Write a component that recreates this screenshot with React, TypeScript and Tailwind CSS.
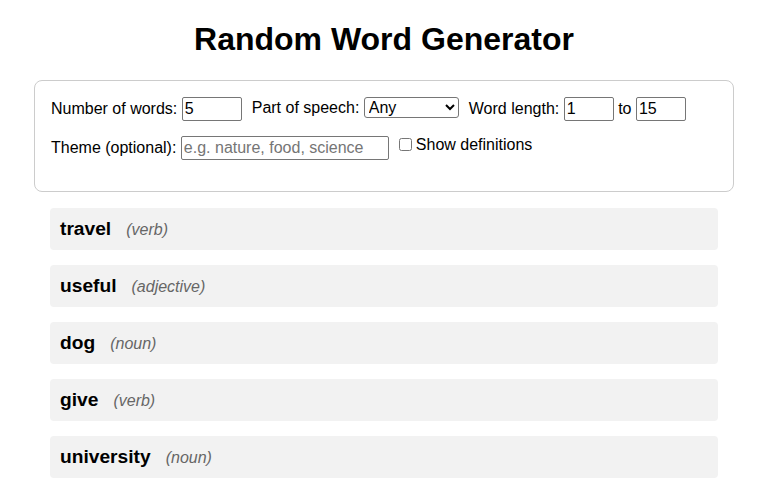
import { useState } from "react";

interface WordEntry {
  word: string;
  pos: string;
}

const WORDS: WordEntry[] = [
  { word: "travel", pos: "verb" },
  { word: "useful", pos: "adjective" },
  { word: "dog", pos: "noun" },
  { word: "give", pos: "verb" },
  { word: "university", pos: "noun" },
];

const inputCls =
  "h-[24px] border border-[#767676] rounded-[2px] bg-white px-[2px] text-[16px] leading-[normal] align-baseline placeholder:text-[#757575] outline-none";

export default function App() {
  const [count, setCount] = useState("5");
  const [pos, setPos] = useState("any");
  const [minLen, setMinLen] = useState("1");
  const [maxLen, setMaxLen] = useState("15");
  const [theme, setTheme] = useState("");
  const [showDefs, setShowDefs] = useState(false);

  return (
    <div className="min-h-screen bg-white font-['Liberation_Sans',Arial,sans-serif] text-[16px] leading-[normal] text-black">
      <div className="mx-auto max-w-[700px]">
        <h1 className="my-[21.44px] text-center text-[32px] font-bold leading-[normal]">
          Random Word Generator
        </h1>

        <div className="rounded-[8px] border border-[#cccccc] p-[16px]">
          <div className="mb-[15px] flex flex-wrap items-start gap-x-[10px]">
            <label className="block">
              Number of words:{" "}
              <input
                type="text"
                value={count}
                onChange={(e) => setCount(e.target.value)}
                className={`${inputCls} w-[60px]`}
              />
            </label>
            <label className="block">
              Part of speech:{" "}
              <select
                value={pos}
                onChange={(e) => setPos(e.target.value)}
                className="h-[21px] w-[95px] rounded-[3px] border border-[#767676] bg-white text-[16px] leading-[normal] align-baseline"
              >
                <option value="any">Any</option>
                <option value="noun">Noun</option>
                <option value="verb">Verb</option>
                <option value="adjective">Adjective</option>
              </select>
            </label>
            <label className="block">
              Word length:{" "}
              <input
                type="text"
                value={minLen}
                onChange={(e) => setMinLen(e.target.value)}
                className={`${inputCls} w-[50px]`}
              />{" "}
              to{" "}
              <input
                type="text"
                value={maxLen}
                onChange={(e) => setMaxLen(e.target.value)}
                className={`${inputCls} w-[50px]`}
              />
            </label>
          </div>

          <div className="mb-[15px] flex flex-wrap items-start gap-x-[10px]">
            <label className="block">
              Theme (optional):{" "}
              <input
                type="text"
                value={theme}
                placeholder="e.g. nature, food, science"
                onChange={(e) => setTheme(e.target.value)}
                className={`${inputCls} w-[208px]`}
              />
            </label>
            <label className="block">
              <input
                type="checkbox"
                checked={showDefs}
                onChange={(e) => setShowDefs(e.target.checked)}
                className="m-0 mr-[4px] h-[13px] w-[13px] align-[-1px]"
              />
              Show definitions
            </label>
          </div>
        </div>

        <div className="mt-[16px] flex flex-col gap-[15px] px-[16px]">
          {WORDS.map((w) => (
            <div key={w.word} className="rounded-[4px] bg-[#f2f2f2] p-[10px]">
              <span className="text-[19.2px] font-bold">{w.word}</span>
              <span className="ml-[15px] italic text-[#666666]">({w.pos})</span>
            </div>
          ))}
        </div>
      </div>
    </div>
  );
}
